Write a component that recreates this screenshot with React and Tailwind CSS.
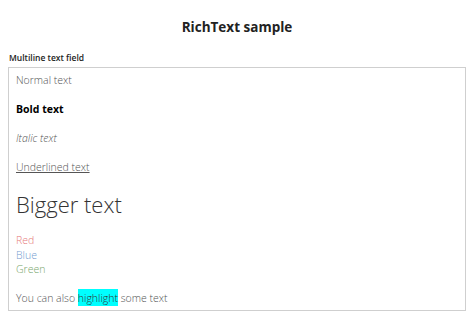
export default function App() {
  return (
    <div className="w-[474px] h-[317px] bg-white overflow-hidden">
      <div className="font-['Open_Sans',sans-serif] pt-[17px]">
        <h1 className="text-center text-[13.5px] leading-[20px] font-bold text-[#222]">RichText sample</h1>
        <div className="mt-[15px] pl-[9px] text-[8.5px] leading-[12px] font-semibold text-[#222]">Multiline text field</div>
        <div className="mt-[3px] ml-[8px] w-[458px] h-[244px] border border-[#cfcfcf] px-[7px] pt-[5px] text-[10.5px] leading-[15px] font-light text-[#555]">
          <p>Normal text</p>
          <p className="mt-[14px] font-bold text-black">Bold text</p>
          <p className="mt-[14px] italic">Italic text</p>
          <p className="mt-[14px] underline">Underlined text</p>
          <p className="mt-[13px] text-[22px] leading-[32px] text-[#333]">Bigger text</p>
          <p className="mt-[13px] leading-[14.5px] text-[#e67878]">Red</p>
          <p className="leading-[14.5px] text-[#759dd0]">Blue</p>
          <p className="leading-[14.5px] text-[#78a66c]">Green</p>
          <p className="mt-[14px]">You can also <span className="bg-[#00ffff] text-[#333] py-[1.5px]">highlight</span> some text</p>
        </div>
      </div>
    </div>
  );
}
